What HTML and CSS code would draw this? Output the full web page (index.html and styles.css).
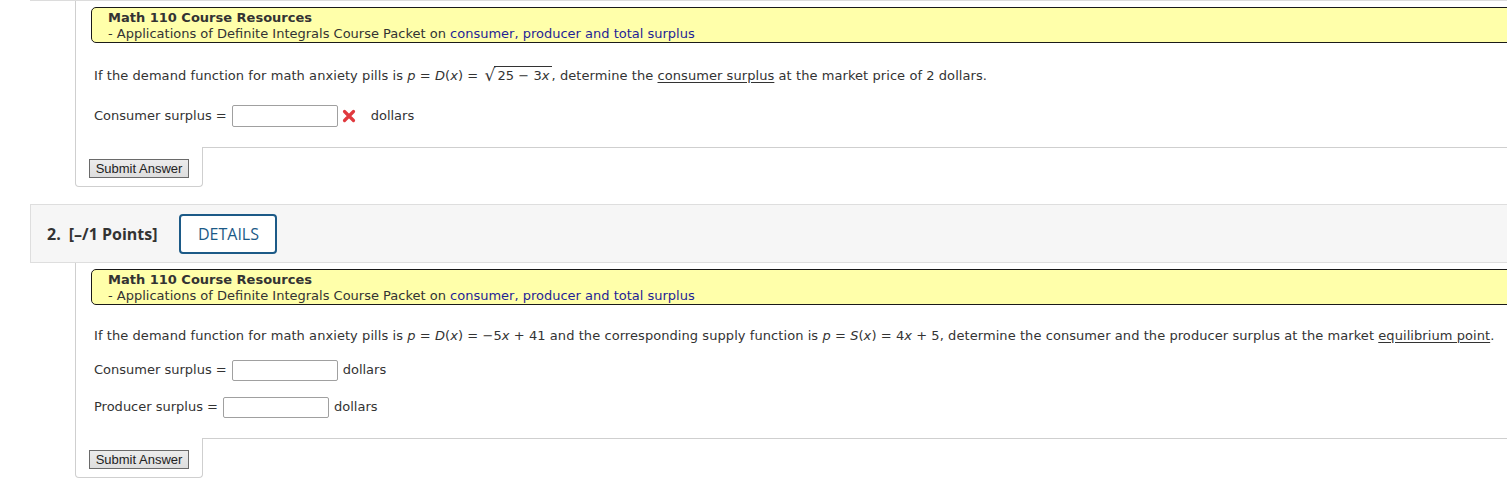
FILE: index.html
```html
<!DOCTYPE html>
<html>
<head>
<meta charset="utf-8">
<link rel="stylesheet" href="styles.css">
</head>
<body>
<div class="page">
  <section class="question question-first">
    <div class="qbody">
      <div class="resource">
        <div class="resource-title">Math 110 Course Resources</div>
        <div class="resource-line">- Applications of Definite Integrals Course Packet on <a class="res-link">consumer, producer and total surplus</a></div>
      </div>
      <p class="prompt prompt-1">If the demand function for math anxiety pills is <i>p</i> = <i>D</i>(<i>x</i>) = <span class="sqrt"><span class="rad">√</span><span class="radicand">25 − 3<i>x</i></span></span>, determine the <span class="term">consumer surplus</span> at the market price of 2 dollars.</p>
      <div class="answer-row row-1">
        <span class="label">Consumer surplus =</span>
        <span class="field"></span>
        <svg class="wrong" width="14" height="14" viewBox="0 0 14 14"><path d="M2.5 2.5 L11.5 11.5 M11.5 2.5 L2.5 11.5" stroke="#e0393e" stroke-width="3.2" stroke-linecap="round"/></svg>
        <span class="unit unit-wide">dollars</span>
      </div>
    </div>
    <div class="qfoot">
      <div class="tab"><button class="submit">Submit Answer</button></div>
      <div class="fill"></div>
    </div>
  </section>

  <header class="qhead">
    <span class="qnum">2.</span>
    <span class="points">[–/1 Points]</span>
    <span class="details">DETAILS</span>
  </header>

  <section class="question question-second">
    <div class="qbody">
      <div class="resource">
        <div class="resource-title">Math 110 Course Resources</div>
        <div class="resource-line">- Applications of Definite Integrals Course Packet on <a class="res-link">consumer, producer and total surplus</a></div>
      </div>
      <p class="prompt prompt-2">If the demand function for math anxiety pills is <i>p</i> = <i>D</i>(<i>x</i>) = −5<i>x</i> + 41 and the corresponding supply function is <i>p</i> = <i>S</i>(<i>x</i>) = 4<i>x</i> + 5, determine the consumer and the producer surplus at the market <span class="term">equilibrium point</span>.</p>
      <div class="answer-row row-2">
        <span class="label">Consumer surplus =</span>
        <span class="field"></span>
        <span class="unit">dollars</span>
      </div>
      <div class="answer-row row-3">
        <span class="label">Producer surplus =</span>
        <span class="field"></span>
        <span class="unit">dollars</span>
      </div>
    </div>
    <div class="qfoot">
      <div class="tab"><button class="submit">Submit Answer</button></div>
      <div class="fill"></div>
    </div>
  </section>
</div>
</body>
</html>
```

FILE: styles.css
```css
html, body {
  margin: 0;
  padding: 0;
  background: #fff;
  overflow: hidden;
}

.page {
  width: 1520px;
  padding-left: 30px;
  font-family: "DejaVu Sans", Verdana, sans-serif;
  font-size: 13px;
  line-height: 16px;
  color: #333;
}

.question {
  display: flex;
  flex-direction: column;
}

.question-first {
  border-top: 1px solid #dcdcdc;
}

.qbody {
  margin-left: 45px;
  border-left: 1px solid #cfcfcf;
  padding: 6px 0 20px 15px;
}

.question-second .qbody {
  padding-top: 6px;
  padding-bottom: 20px;
}

.resource {
  background: #ffffaa;
  border: 1px solid #1a1a1a;
  border-radius: 5px 0 0 5px;
  padding: 2px 16px 0 16px;
  color: #333;
}

.resource-title {
  font-weight: bold;
}

.res-link {
  color: #1f1f96;
  text-decoration: none;
}

.prompt {
  margin: 0;
  padding-left: 3px;
  color: #333;
  letter-spacing: 0.07px;
}

.prompt-1 {
  margin-top: 23px;
}

.prompt-2 {
  margin-top: 23px;
}

.sqrt {
  display: inline-block;
  line-height: 16px;
  margin-left: 2px;
}

.rad {
  font-size: 17px;
  display: inline-block;
  vertical-align: -1px;
  margin-right: -1px;
}

.radicand {
  display: inline-block;
  border-top: 1px solid #333;
  padding: 1px 2px 0 3px;
}

.term {
  text-decoration: underline;
  text-underline-offset: 2px;
}

.answer-row {
  display: flex;
  align-items: center;
  height: 22px;
  padding-left: 3px;
}

.row-1 {
  margin-top: 21px;
}

.row-2 {
  margin-top: 15px;
}

.row-3 {
  margin-top: 15px;
}

.label {
  margin-right: 5px;
}

.field {
  display: inline-block;
  width: 104px;
  height: 19px;
  border: 1px solid #a0a0a0;
  border-radius: 2px;
  background: #fff;
}

.row-1 .field {
  height: 20px;
}

.wrong {
  margin-left: 4px;
}

.unit {
  margin-left: 5px;
}

.unit-wide {
  margin-left: 15px;
}

.qfoot {
  display: flex;
  margin-left: 45px;
}

.tab {
  width: 128px;
  height: 40px;
  border: 1px solid #cfcfcf;
  border-top: none;
  border-radius: 0 0 4px 4px;
  box-sizing: border-box;
  padding: 12px 0 0 13px;
}

.fill {
  flex: 1;
  border-top: 1px solid #cfcfcf;
}

.submit {
  display: block;
  font-family: "Liberation Sans", Arial, sans-serif;
  font-size: 13px;
  line-height: 15px;
  height: 19px;
  width: 100px;
  padding: 0;
  color: #222;
  background: linear-gradient(#ececec, #dedede);
  border: 1px solid #6a6a6a;
  border-radius: 0;
}

.qhead {
  display: flex;
  align-items: center;
  margin-top: 17px;
  height: 59px;
  box-sizing: border-box;
  border: 1px solid #dedede;
  border-right: none;
  background: #f6f6f6;
  padding-left: 16px;
  font-family: "Open Sans", "Noto Sans", sans-serif;
  font-size: 16px;
  color: #333;
}

.qnum {
  font-weight: bold;
  margin-right: 8px;
}

.points {
  font-weight: bold;
  margin-right: 22px;
}

.details {
  display: inline-flex;
  align-items: center;
  justify-content: center;
  width: 98px;
  height: 40px;
  box-sizing: border-box;
  border: 2px solid #1c5a87;
  border-radius: 4px;
  color: #1c5a87;
  font-size: 16px;
  background: #fff;
}
```
